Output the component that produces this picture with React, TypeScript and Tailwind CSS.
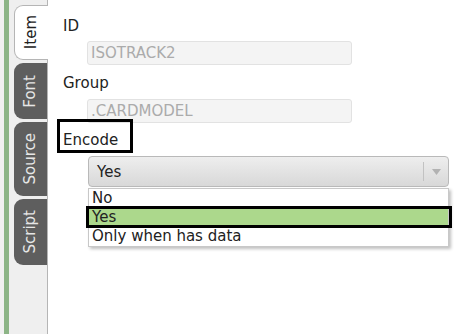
import React from "react";

const font = { fontFamily: '"DejaVu Sans", sans-serif' };

function Tab({ label, active, h }: { label: string; active?: boolean; h: string }) {
  return (
    <div
      className={
        "relative w-[33px] rounded-l-[9px] flex items-center justify-center " +
        h +
        (active
          ? " bg-white border border-r-0 border-[#b5b5b5] z-10 w-[34px]"
          : " bg-[#5e5e5e] text-[#e6e6e6]")
      }
    >
      <span className="[writing-mode:vertical-rl] rotate-180 text-[15px] leading-none">{label}</span>
    </div>
  );
}

export default function App() {
  return (
    <div className="flex w-[460px] h-[334px] bg-white text-[#222]" style={font}>
      <div className="w-[4px] bg-[#f1f1f1]" />
      <div className="w-[5px] bg-[#8db587]" />
      <div className="w-[39px] bg-[#efefef] border-r border-[#b5b5b5] flex flex-col items-end pt-[5px] gap-[3px] relative">
        <div className="-mr-px">
          <Tab label="Item" active h="h-[55px]" />
        </div>
        <Tab label="Font" h="h-[56px]" />
        <Tab label="Source" h="h-[74px]" />
        <Tab label="Script" h="h-[66px]" />
      </div>
      <div className="flex-1 flex flex-col pl-[15px] pt-[17px] text-[15px] leading-[18px]">
        <div>ID</div>
        <div className="mt-[6px] ml-[24px] w-[265px] h-[24px] rounded-[3px] bg-[#f4f4f4] border border-[#e2e2e2] text-[#ababab] pl-[3px] flex items-center">
          ISOTRACK2
        </div>
        <div className="mt-[9px]">Group</div>
        <div className="mt-[7px] ml-[24px] w-[265px] h-[24px] rounded-[3px] bg-[#f4f4f4] border border-[#e2e2e2] text-[#ababab] pl-[3px] flex items-center">
          .CARDMODEL
        </div>
        <div className="mt-[8px] relative self-start">
          <span>Encode</span>
          <div className="absolute left-[-6px] top-[-12px] w-[76px] h-[34px] border-[3px] border-black" />
        </div>
        <div className="mt-[7px] ml-[25px] w-[361px] h-[31px] rounded-[4px] border border-[#b9b9b9] bg-gradient-to-b from-[#eeeeee] to-[#d8d8d8] flex items-center">
          <span className="flex-1 pl-[8px]">Yes</span>
          <div className="w-px h-[19px] bg-[#c2c2c2]" />
          <div className="w-[24px] flex justify-center">
            <svg width="9" height="6" viewBox="0 0 9 6">
              <path d="M0 0 H9 L4.5 6 Z" fill="#b2b2b2" />
            </svg>
          </div>
        </div>
        <div className="mt-px ml-[25px] w-[361px] bg-white border border-[#c8c8c8] shadow-[2px_2px_3px_rgba(0,0,0,0.25)] leading-[18px] pb-[1px]">
          <div className="pl-[3px]">No</div>
          <div className="relative pl-[3px] bg-[#acd88c] h-[20px] leading-[20px]">
            Yes
            <div className="absolute left-[-3px] right-[-4px] top-[-1px] bottom-[-1px] border-[3px] border-black" />
          </div>
          <div className="pl-[3px]">Only when has data</div>
        </div>
      </div>
    </div>
  );
}
